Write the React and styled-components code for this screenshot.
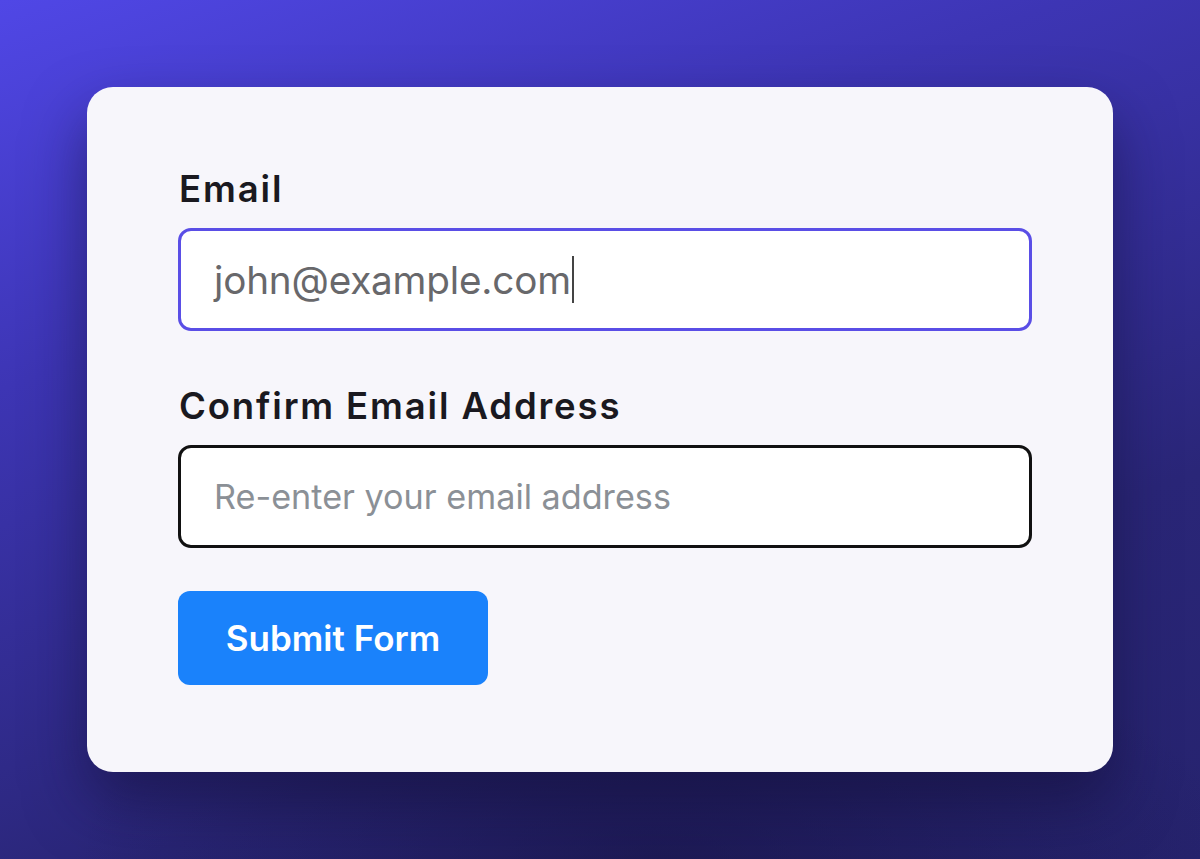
import React from "react";
import styled, { createGlobalStyle } from "styled-components";

const Global = createGlobalStyle`
  html, body { margin: 0; padding: 0; }
  body {
    width: 1200px;
    height: 859px;
    overflow: hidden;
    font-family: Inter, "Liberation Sans", sans-serif;
    background:
      radial-gradient(ellipse 70% 40% at 55% 100%, rgba(20,17,60,0.55), rgba(20,17,60,0) 70%),
      linear-gradient(160deg, #5047e6 0%, #3d35b4 30%, #2a2678 70%, #26236e 100%);
  }
`;

const Stage = styled.div`
  box-sizing: border-box;
  width: 1200px;
  height: 859px;
  padding: 87px;
`;

const Card = styled.div`
  box-sizing: border-box;
  width: 1026px;
  height: 685px;
  background: #f7f6fb;
  border-radius: 26px;
  box-shadow: 0 30px 60px rgba(18, 15, 55, 0.55);
  padding: 80px 81px 0 91px;
`;

const Form = styled.form`
  display: flex;
  flex-direction: column;
`;

const Label = styled.label`
  display: block;
  font-family: Inter, "Liberation Sans", sans-serif;
  font-weight: 600;
  font-size: 36.5px;
  line-height: 44px;
  color: #1a1920;
  letter-spacing: 1.85px;
  margin: ${(p) => p.$top || 0}px 0 17px 1px;
`;

const Field = styled.div`
  box-sizing: border-box;
  height: 103px;
  width: 854px;
  background: #ffffff;
  border: 3px solid ${(p) => (p.$focused ? "#5a4ee6" : "#111111")};
  border-radius: 13px;
  display: flex;
  align-items: center;
  padding: 0 0 0 33px;
  font-family: Inter, "Liberation Sans", sans-serif;
`;

const Value = styled.span`
  font-size: 38.7px;
  color: #68686b;
  letter-spacing: -0.2px;
`;

const Placeholder = styled.span`
  font-size: 34.2px;
  color: #8b9096;
`;

const Caret = styled.span`
  display: inline-block;
  width: 2px;
  height: 47px;
  background: #444;
  margin-left: 1px;
`;

const Button = styled.button`
  margin-top: 43px;
  align-self: flex-start;
  width: 310px;
  height: 94px;
  border: none;
  border-radius: 12px;
  background: #1a82fb;
  color: #ffffff;
  font-family: Inter, "Liberation Sans", sans-serif;
  font-weight: 600;
  font-size: 35px;
  cursor: pointer;
`;

export default function App() {
  return (
    <>
      <Global />
      <Stage>
        <Card>
          <Form onSubmit={(e) => e.preventDefault()}>
            <Label>Email</Label>
            <Field $focused>
              <Value>john@example.com</Value>
              <Caret />
            </Field>
            <Label $top={53}>Confirm Email Address</Label>
            <Field>
              <Placeholder>Re-enter your email address</Placeholder>
            </Field>
            <Button type="submit">Submit Form</Button>
          </Form>
        </Card>
      </Stage>
    </>
  );
}
